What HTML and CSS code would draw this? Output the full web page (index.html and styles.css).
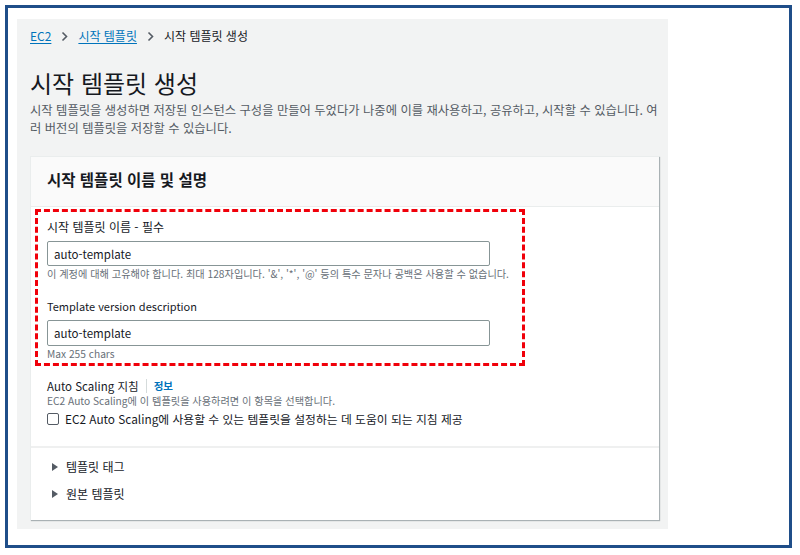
FILE: index.html
```html
<!DOCTYPE html>
<html lang="ko">
<head>
  <meta charset="utf-8">
  <title>시작 템플릿 생성</title>
  <link rel="stylesheet" href="styles.css">
</head>
<body>
  <div class="frame">
    <div class="panel">

      <!-- breadcrumb -->
      <nav class="crumbs">
        <a href="#">EC2</a>
        <svg class="chev" width="7" height="11" viewBox="0 0 7 11"><path d="M1.5 1.5l4 4-4 4" fill="none" stroke="#545b64" stroke-width="1.6"/></svg>
        <a href="#">시작 템플릿</a>
        <svg class="chev" width="7" height="11" viewBox="0 0 7 11"><path d="M1.5 1.5l4 4-4 4" fill="none" stroke="#545b64" stroke-width="1.6"/></svg>
        <span>시작 템플릿 생성</span>
      </nav>

      <h1 class="title">시작 템플릿 생성</h1>
      <p class="desc">시작 템플릿을 생성하면 저장된 인스턴스 구성을 만들어 두었다가 나중에 이를 재사용하고, 공유하고, 시작할 수 있습니다. 여러 버전의 템플릿을 저장할 수 있습니다.</p>

      <div class="card">
        <div class="card-head">시작 템플릿 이름 및 설명</div>

        <!-- name + description fields -->
        <div class="marked">
          <label class="field-label">시작 템플릿 이름 - 필수</label>
          <input class="text-input" type="text" value="auto-template">
          <div class="hint">이 계정에 대해 고유해야 합니다. 최대 128자입니다. '&amp;', '*', '@' 등의 특수 문자나 공백은 사용할 수 없습니다.</div>

          <label class="field-label second">Template version description</label>
          <input class="text-input tall" type="text" value="auto-template">
          <div class="hint">Max 255 chars</div>
        </div>

        <!-- auto scaling guidance -->
        <div class="guide">
          <div class="guide-title">Auto Scaling 지침 <span class="bar"></span> <a href="#" class="info">정보</a></div>
          <div class="hint">EC2 Auto Scaling에 이 템플릿을 사용하려면 이 항목을 선택합니다.</div>
          <label class="check-row">
            <input type="checkbox" class="check">
            EC2 Auto Scaling에 사용할 수 있는 템플릿을 설정하는 데 도움이 되는 지침 제공
          </label>
        </div>

        <div class="expanders">
          <div class="expander"><span class="caret"></span>템플릿 태그</div>
          <div class="expander"><span class="caret"></span>원본 템플릿</div>
        </div>
      </div>

    </div>
  </div>
</body>
</html>
```

FILE: styles.css
```css
body {
  margin: 0;
  font-family: "Noto Sans CJK KR", "Noto Sans", sans-serif;
  color: #16191f;
  background: #fff;
}

.frame {
  margin: 5px 0 0 5px;
  width: 787px;
  height: 543px;
  box-sizing: border-box;
  border: 3px solid #1f4e89;
  padding: 11px 0 0 9px;
}

.panel {
  width: 651px;
  height: 510px;
  box-sizing: border-box;
  background: #f2f3f3;
  padding: 9px 9px 0 13px;
}

/* breadcrumb */
.crumbs {
  display: flex;
  align-items: center;
  gap: 10px;
  font-size: 12px;
  line-height: 16px;
  color: #16191f;
}
.crumbs a {
  color: #0073bb;
  text-decoration: underline;
  text-underline-offset: 2px;
}

.title {
  margin: 24px 0 0;
  font-size: 24px;
  line-height: 30px;
  font-weight: 400;
}

.desc {
  margin: 3px 0 0;
  width: 630px;
  font-size: 12.3px;
  line-height: 18px;
  color: #545b64;
  word-break: break-all;
}

/* card */
.card {
  margin-top: 19px;
  background: #fff;
  border-top: 1px solid #eaeded;
  border-left: 1px solid #eaeded;
  box-shadow: 1px 1px 1px rgba(0, 28, 36, 0.3);
  padding-bottom: 18px;
}
.card-head {
  background: #fafafa;
  border-bottom: 1px solid #eaeded;
  padding: 12px 16px 17px;
  font-size: 15.5px;
  line-height: 20px;
  font-weight: 700;
}

.marked {
  margin: 2px 0 0 4px;
  width: 490px;
  box-sizing: border-box;
  border: 3px dashed #f0000a;
  padding: 7px 0 2px 9px;
}

.field-label {
  display: block;
  font-size: 12px;
  line-height: 16px;
}
.field-label.second {
  margin-top: 17px;
  font-size: 11px;
}

.text-input {
  display: block;
  margin-top: 6px;
  width: 443px;
  height: 25px;
  box-sizing: border-box;
  border: 1px solid #879596;
  border-radius: 2px;
  padding: 0 6px;
  font-family: inherit;
  font-size: 11.5px;
  color: #16191f;
}
.text-input.tall { height: 26px; }

.hint {
  margin-top: 1px;
  font-size: 10.2px;
  line-height: 14px;
  color: #687078;
}

/* auto scaling guidance */
.guide {
  padding: 12px 0 0 16px;
}
.guide .hint { margin-top: 0; }
.guide-title {
  display: flex;
  align-items: center;
  font-size: 11.5px;
  line-height: 16px;
}
.bar {
  width: 1px;
  height: 14px;
  background: #d5dbdb;
  margin: 0 7px;
}
.info {
  color: #0073bb;
  text-decoration: none;
  font-weight: 700;
  font-size: 10.5px;
}
.check-row {
  display: flex;
  align-items: center;
  gap: 6px;
  margin-top: 3px;
  font-size: 11.8px;
  line-height: 16px;
}
.check {
  appearance: none;
  margin: 0;
  width: 12px;
  height: 12px;
  border: 1px solid #545b64;
  border-radius: 2px;
  background: #fff;
}

/* collapsed sections */
.expanders {
  margin-top: 19px;
  border-top: 2px solid #eff0f0;
  padding: 11px 0 0 21px;
  display: flex;
  flex-direction: column;
  gap: 11px;
}
.expander {
  display: flex;
  align-items: center;
  font-size: 12px;
  line-height: 16px;
}
.caret {
  width: 0;
  height: 0;
  border-left: 6px solid #545b64;
  border-top: 4px solid transparent;
  border-bottom: 4px solid transparent;
  margin-right: 8px;
}
```
